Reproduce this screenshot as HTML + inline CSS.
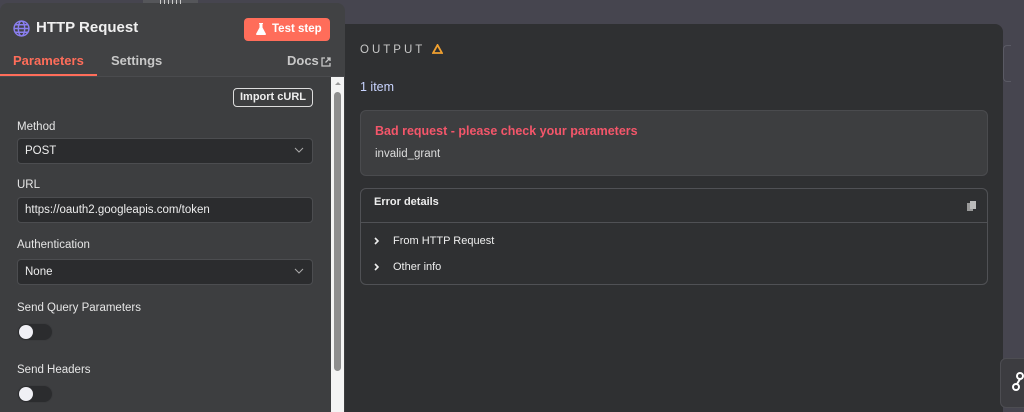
<!DOCTYPE html>
<html style="overflow:hidden;height:412px"><head><style>
*{box-sizing:border-box;margin:0;padding:0}
body{width:1024px;height:412px;overflow:hidden;background:#46454f;font-family:"Liberation Sans",sans-serif;position:relative;color:#e0e0e0}
.abs{position:absolute}
.left{left:0;top:3px;width:345px;height:409px;background:#414244;border-radius:8px 8px 0 0}
.lbl{position:absolute;left:17px;font-size:11.5px;color:#e6e6e6}
.inp{position:absolute;left:17px;width:296px;height:26px;background:#2b2c2e;border:1px solid #4c4d50;border-radius:4px;font-size:11.5px;color:#eee;padding:6px 7px}
.chev{position:absolute;right:8px;top:6px}
.tog{position:absolute;left:17px;width:36px;height:18px;border-radius:9px;background:#2b2c2e;border:1px solid #3a3b3d}
.tog:after{content:"";position:absolute;left:1px;top:1px;width:14px;height:14px;border-radius:50%;background:#f0f0f5}
</style></head><body>
<div class="abs" style="left:143px;top:0;width:55px;height:4px;background:#55565a"></div>
<div class="abs left"></div>
<div class="abs" style="left:160px;top:0;width:22px;height:4px;background:repeating-linear-gradient(90deg,#ccc 0 1px,transparent 1px 4px)"></div>
<div class="abs" style="left:0;top:77px;width:345px;height:335px;background:#3d3e40"></div>
<svg class="abs" style="left:13px;top:20px" width="17" height="17" viewBox="0 0 16 16" fill="none" stroke="#8a7ff0" stroke-width="1.4"><circle cx="8" cy="8" r="7"/><ellipse cx="8" cy="8" rx="3" ry="7"/><path d="M1 8h14M2 4.5h12M2 11.5h12"/></svg>
<div class="abs" style="left:36px;top:19px;font-size:15px;font-weight:bold;color:#f0f0f0">HTTP Request</div>
<div class="abs" style="left:244px;top:18px;width:86px;height:23px;background:#ff6d5a;border-radius:4px;color:#fff;font-size:11.5px;font-weight:bold;padding:5px 0 0 28px">Test step</div>
<svg class="abs" style="left:256px;top:23px" width="10" height="12" viewBox="0 0 10 12"><path d="M3 0h4v1H6.5v3.5L10 11c0 .6-.4 1-1 1H1c-.6 0-1-.4-1-1l3.5-6.5V1H3z" fill="#fff"/></svg>
<div class="abs" style="left:13px;top:53px;font-size:13px;font-weight:bold;color:#ff6d5a">Parameters</div>
<div class="abs" style="left:0;top:74px;width:97px;height:2px;background:#ff6d5a"></div>
<div class="abs" style="left:0;top:76px;width:345px;height:1px;background:#4a4b4e"></div>
<div class="abs" style="left:111px;top:53px;font-size:13px;font-weight:bold;color:#c8c8c8">Settings</div>
<div class="abs" style="left:287px;top:53px;font-size:13px;font-weight:bold;color:#c8c8c8">Docs</div>
<svg class="abs" style="left:321px;top:57px" width="10" height="10" viewBox="0 0 10 10" fill="none" stroke="#c8c8c8" stroke-width="1.3"><path d="M4 1H1v8h8V6M6 1h3v3M9 1L4.5 5.5"/></svg>
<div class="abs" style="left:331px;top:77px;width:13px;height:335px;background:#f4f4f4"></div>
<div class="abs" style="left:334px;top:92px;width:7px;height:279px;background:#8e8e8e;border-radius:4px"></div>
<div class="abs" style="left:335px;top:82px;width:0;height:0;border-left:3px solid transparent;border-right:3px solid transparent;border-bottom:3px solid #999"></div>
<div class="abs" style="left:233px;top:88px;width:80px;height:19px;border:1px solid #ddd;border-radius:4px;font-size:11px;font-weight:bold;color:#eee;text-align:center;padding-top:2px">Import cURL</div>
<div class="lbl" style="top:121px">Method</div>
<div class="inp" style="top:138px">POST<svg class="chev" width="10" height="10" viewBox="0 0 10 10"><path d="M1 3l4 4 4-4" fill="none" stroke="#aaa"/></svg></div>
<div class="lbl" style="top:179px">URL</div>
<div class="inp" style="top:197px">https://oauth2.googleapis.com/token</div>
<div class="lbl" style="top:239px">Authentication</div>
<div class="inp" style="top:259px">None<svg class="chev" width="10" height="10" viewBox="0 0 10 10"><path d="M1 3l4 4 4-4" fill="none" stroke="#aaa"/></svg></div>
<div class="lbl" style="top:302px">Send Query Parameters</div>
<div class="tog" style="top:323px"></div>
<div class="lbl" style="top:364px">Send Headers</div>
<div class="tog" style="top:385px"></div>

<div class="abs" style="left:345px;top:24px;width:658px;height:388px;background:#2f3032;border-radius:0 8px 0 0"></div>
<div class="abs" style="left:1003px;top:45px;width:8px;height:37px;border:1px solid #5a5a64;border-radius:4px 0 0 4px;border-right:none"></div>
<div class="abs" style="left:360px;top:44px;font-size:11.5px;letter-spacing:3px;color:#c8c8c8">OUTPUT</div>
<svg class="abs" style="left:432px;top:44px" width="11" height="10" viewBox="0 0 11 10"><path d="M5.5 1L10 9H1z" fill="none" stroke="#f0a030" stroke-width="1.8"/></svg>
<div class="abs" style="left:360px;top:80px;font-size:12.5px;color:#c9d4ff">1 item</div>
<div class="abs" style="left:360px;top:110px;width:628px;height:66px;background:#3d3e40;border:1px solid #4a4b4e;border-radius:6px"></div>
<div class="abs" style="left:375px;top:124px;font-size:12.5px;font-weight:bold;color:#f4566a">Bad request - please check your parameters</div>
<div class="abs" style="left:375px;top:148px;font-size:11.5px;color:#ddd">invalid_grant</div>
<div class="abs" style="left:360px;top:188px;width:628px;height:97px;border:1px solid #505155;border-radius:6px"></div>
<div class="abs" style="left:361px;top:222px;width:626px;height:1px;background:#505155"></div>
<div class="abs" style="left:374px;top:196px;font-size:11px;font-weight:bold;color:#eee">Error details</div>
<svg class="abs" style="left:967px;top:201px" width="9" height="10" viewBox="0 0 9 10"><rect x="0" y="2" width="6" height="8" fill="#999"/><rect x="3" y="0" width="6" height="8" fill="#bbb"/></svg>
<svg class="abs" style="left:374px;top:237px" width="6" height="8" viewBox="0 0 6 8"><path d="M1 1l3 3-3 3" fill="none" stroke="#eee" stroke-width="1.6"/></svg>
<div class="abs" style="left:393px;top:235px;font-size:11px;color:#eee">From HTTP Request</div>
<svg class="abs" style="left:374px;top:263px" width="6" height="8" viewBox="0 0 6 8"><path d="M1 1l3 3-3 3" fill="none" stroke="#eee" stroke-width="1.6"/></svg>
<div class="abs" style="left:393px;top:261px;font-size:11px;color:#eee">Other info</div>
<div class="abs" style="left:1000px;top:358px;width:30px;height:50px;background:#3c3c40;border:1px solid #4d4d52;border-radius:6px"></div>
<svg class="abs" style="left:1012px;top:372px" width="14" height="20" viewBox="0 0 14 20" fill="none" stroke="#fff" stroke-width="2"><circle cx="8" cy="4" r="3"/><circle cx="4" cy="15" r="3"/><path d="M8 7L5 12"/></svg>
</body></html>
